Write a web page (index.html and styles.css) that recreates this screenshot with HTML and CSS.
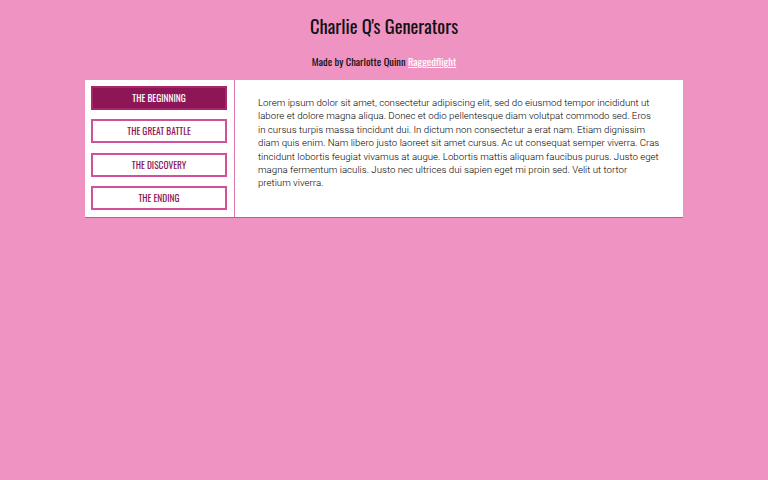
FILE: index.html
```html
<!DOCTYPE html>
<html lang="en">
<head>
  <meta charset="UTF-8">
  <title>Charlie Q's Generators</title>
  <link rel="stylesheet" href="styles.css">
</head>
<body>

  <header class="page-header">
    <h1>Charlie Q's Generators</h1>
    <p class="byline">Made by Charlotte Quinn <a href="#">Raggedflight</a></p>
  </header>

  <div class="story-box">
    <nav class="chapters">
      <button type="button" class="chapter-btn active">The Beginning</button>
      <button type="button" class="chapter-btn">The Great Battle</button>
      <button type="button" class="chapter-btn">The Discovery</button>
      <button type="button" class="chapter-btn">The Ending</button>
    </nav>
    <div class="chapter-text">
      <p>Lorem ipsum dolor sit amet, consectetur adipiscing elit, sed do eiusmod tempor incididunt ut labore et dolore magna aliqua. Donec et odio pellentesque diam volutpat commodo sed. Eros in cursus turpis massa tincidunt dui. In dictum non consectetur a erat nam. Etiam dignissim diam quis enim. Nam libero justo laoreet sit amet cursus. Ac ut consequat semper viverra. Cras tincidunt lobortis feugiat vivamus at augue. Lobortis mattis aliquam faucibus purus. Justo eget magna fermentum iaculis. Justo nec ultrices dui sapien eget mi proin sed. Velit ut tortor pretium viverra.</p>
    </div>
  </div>

</body>
</html>
```

FILE: styles.css
```css
body {
  margin: 0;
  background: #ef93c3;
  font-family: 'Oswald', 'Roboto Condensed', sans-serif;
}

.page-header {
  text-align: center;
  color: #111;
}

.page-header h1 {
  margin: 14px 0 0;
  font-size: 18.5px;
  line-height: 24px;
  font-weight: 400;
}

.byline {
  margin: 15px 0 11px;
  font-size: 10.5px;
  line-height: 16px;
}

.byline a {
  color: #fff;
}

.story-box {
  width: 598px;
  margin: 0 auto;
  display: flex;
  background: #fff;
  border-bottom: 1px solid #d2509a;
}

.chapters {
  width: 136px;
  padding: 6px 7px 7px 6px;
  border-right: 1px solid #e07ab0;
  display: flex;
  flex-direction: column;
  gap: 9.33px;
}

.chapter-btn {
  height: 24px;
  padding: 0;
  background: #fff;
  border: 2px solid #d2509a;
  color: #8e1657;
  font-family: 'Oswald', 'Roboto Condensed', sans-serif;
  font-size: 9.4px;
  text-transform: uppercase;
  cursor: pointer;
}

.chapter-btn.active {
  background: #8e1657;
  border-color: #a8276c;
  color: #fff;
}

.chapter-text {
  flex: 1;
  padding: 16px 22.75px 0 23px;
}

.chapter-text p {
  margin: 0;
  font-family: Roboto, sans-serif;
  font-weight: 300;
  font-size: 9.7px;
  line-height: 13.4px;
  color: #000;
}
```
